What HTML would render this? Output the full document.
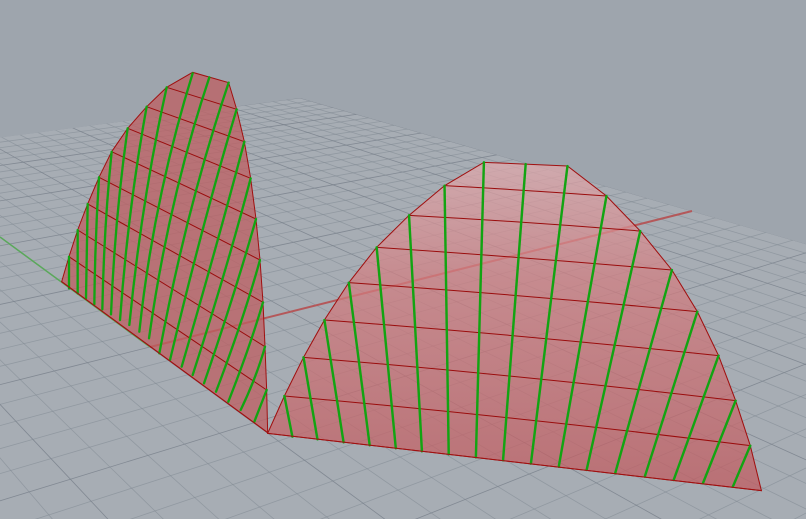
<!DOCTYPE html>
<html><head><meta charset="utf-8">
<style>html,body{margin:0;padding:0;background:#9ea5ad;overflow:hidden;width:806px;height:519px}svg{display:block;position:absolute;left:0;top:0}</style>
</head><body>
<svg id="s" width="806" height="519" viewBox="0 0 806 519" xmlns="http://www.w3.org/2000/svg">
<defs>
<linearGradient id="gr" x1="0" y1="0" x2="0" y2="1">
<stop offset="0" stop-color="#e0a9ac"/>
<stop offset="0.35" stop-color="#d27e81"/>
<stop offset="1" stop-color="#c0595d"/>
</linearGradient>
<clipPath id="pc"><polygon points="300,98 -10,139 -10,530 816,530 816,247"/></clipPath>
</defs>
<rect width="806" height="519" fill="#9ea5ad"/>
<polygon points="300,98 -10,139 -10,530 816,530 816,247" fill="#a7adb4"/>
<g id="grid" clip-path="url(#pc)"></g>
<line x1="150" y1="347" x2="692" y2="211" stroke="#b4585a" stroke-width="2"/>
<line x1="150" y1="347" x2="0" y2="237" stroke="#5aa85a" stroke-width="1.5"/>

<!-- left surface -->
<g transform="translate(0,60) scale(0.33333)" stroke-linecap="round">
<polygon fill="#bd5f62" fill-opacity="0.75" stroke="#a01010" stroke-width="3"
points="185,665 207,590 233,510 263,432 297,352 335,275 383,205 440,140 500,82 578,37 686,68 710,148 733,245 752,355 768,477 780,600 789,727 795,860 800,990 803,1118"/>
<g stroke="#9a0c0c" stroke-width="3">
<line x1="500" y1="82" x2="710" y2="148"/><line x1="440" y1="140" x2="733" y2="245"/>
<line x1="383" y1="205" x2="752" y2="355"/><line x1="335" y1="275" x2="768" y2="477"/>
<line x1="297" y1="352" x2="780" y2="600"/><line x1="263" y1="432" x2="789" y2="727"/>
<line x1="233" y1="510" x2="795" y2="860"/><line x1="207" y1="590" x2="800" y2="990"/>
</g>
<g stroke="#12a412" stroke-width="7" fill="none">
<path d="M207,685 L207,590"/><path d="M233,700 L233,510"/><path d="M258,715 L263,432"/>
<path d="M283,733 Q285,540 297,352"/><path d="M307,748 Q312,500 335,275"/><path d="M333,763 Q345,470 383,205"/>
<path d="M360,780 Q385,440 440,140"/><path d="M388,795 Q425,420 500,82"/><path d="M418,815 Q460,420 578,40"/>
<path d="M447,835 Q505,420 628,52"/><path d="M478,880 Q560,440 686,68"/><path d="M510,900 Q610,480 710,148"/>
<path d="M545,920 Q650,560 733,245"/><path d="M578,945 Q680,630 752,355"/><path d="M612,970 Q705,700 768,477"/>
<path d="M648,995 Q730,780 780,600"/><path d="M685,1025 Q750,860 789,727"/><path d="M722,1050 Q770,950 795,860"/>
<path d="M763,1085 L800,990"/>
</g>
<line x1="185" y1="665" x2="803" y2="1118" stroke="#a01010" stroke-width="3"/>
</g>

<!-- right surface -->
<g transform="translate(260,150) scale(0.3482,0.33333)" stroke-linecap="round">
<polygon fill="url(#gr)" fill-opacity="0.72" stroke="#a01010" stroke-width="3"
points="22,850 70,738 125,622 185,510 255,398 335,292 428,196 530,107 643,37 883,48 995,138 1092,243 1183,360 1256,485 1317,617 1366,752 1408,887 1440,1022"/>
<g stroke="#9a0c0c" stroke-width="3" fill="none">
<path d="M70,738 Q740,800 1408,887"/><path d="M125,622 Q745,675 1366,752"/>
<path d="M185,510 Q750,555 1317,617"/><path d="M255,398 Q755,435 1256,485"/>
<path d="M335,292 Q760,322 1183,360"/><path d="M428,196 Q760,215 1092,243"/>
<path d="M530,107 Q760,120 995,138"/>
</g>
<g stroke="#12a412" stroke-width="7" fill="none">
<line x1="93" y1="860" x2="70" y2="738"/><line x1="165" y1="868" x2="125" y2="622"/>
<line x1="240" y1="877" x2="185" y2="510"/><line x1="315" y1="886" x2="255" y2="398"/>
<line x1="390" y1="895" x2="335" y2="292"/><line x1="465" y1="904" x2="428" y2="196"/>
<line x1="542" y1="913" x2="530" y2="107"/><line x1="620" y1="922" x2="643" y2="37"/>
<line x1="698" y1="931" x2="763" y2="42"/><line x1="778" y1="941" x2="883" y2="48"/>
<line x1="858" y1="950" x2="995" y2="138"/><line x1="938" y1="960" x2="1092" y2="243"/>
<line x1="1020" y1="970" x2="1183" y2="360"/><line x1="1105" y1="980" x2="1256" y2="485"/>
<line x1="1188" y1="990" x2="1317" y2="617"/><line x1="1272" y1="1000" x2="1366" y2="752"/>
<line x1="1358" y1="1010" x2="1408" y2="887"/>
</g>
<line x1="22" y1="850" x2="1440" y2="1022" stroke="#a01010" stroke-width="3"/>
</g>
</svg>
<script>
(function(){
var P=[[150,347],[692,211],[300,98],[-116,152]];
var x0=P[0][0],y0=P[0][1],x1=P[1][0],y1=P[1][1],x2=P[2][0],y2=P[2][1],x3=P[3][0],y3=P[3][1];
var dx1=x1-x2,dx2=x3-x2,dx3=x0-x1+x2-x3,dy1=y1-y2,dy2=y3-y2,dy3=y0-y1+y2-y3;
var den=dx1*dy2-dx2*dy1,g=(dx3*dy2-dx2*dy3)/den,h=(dx1*dy3-dx3*dy1)/den;
var a=x1-x0+g*x1,b=x3-x0+h*x3,c=x0,d=y1-y0+g*y1,e=y3-y0+h*y3,f=y0;
function m(u,v){var w=g*u+h*v+1;return w>0.02?[(a*u+b*v+c)/w,(d*u+e*v+f)/w]:null;}
var out='';
function seg(pts,st,sw){var s='';for(var i=0;i<pts.length;i++){var p=pts[i];if(!p)break;s+=(s?' ':'')+p[0].toFixed(1)+','+p[1].toFixed(1);}
 if(s.indexOf(' ')>0)out+='<polyline points="'+s+'" fill="none" stroke="'+st+'" stroke-width="'+sw+'"/>';}
var step=0.04;
for(var k=-100;k<=25;k++){var t=k*step;if(t>1.0001)continue;
 var A=[],B=[];
 for(var j=0;j<=60;j++){var s=1-j*0.1;A.push(m(t,s));B.push(m(s,t));}
 var col=(k%5==0)?'rgba(118,126,136,0.75)':'rgba(128,136,146,0.55)';
 seg(A,col,0.8);seg(B,col,0.8);}
document.getElementById('grid').innerHTML=out;
})();
</script>
</body></html>
